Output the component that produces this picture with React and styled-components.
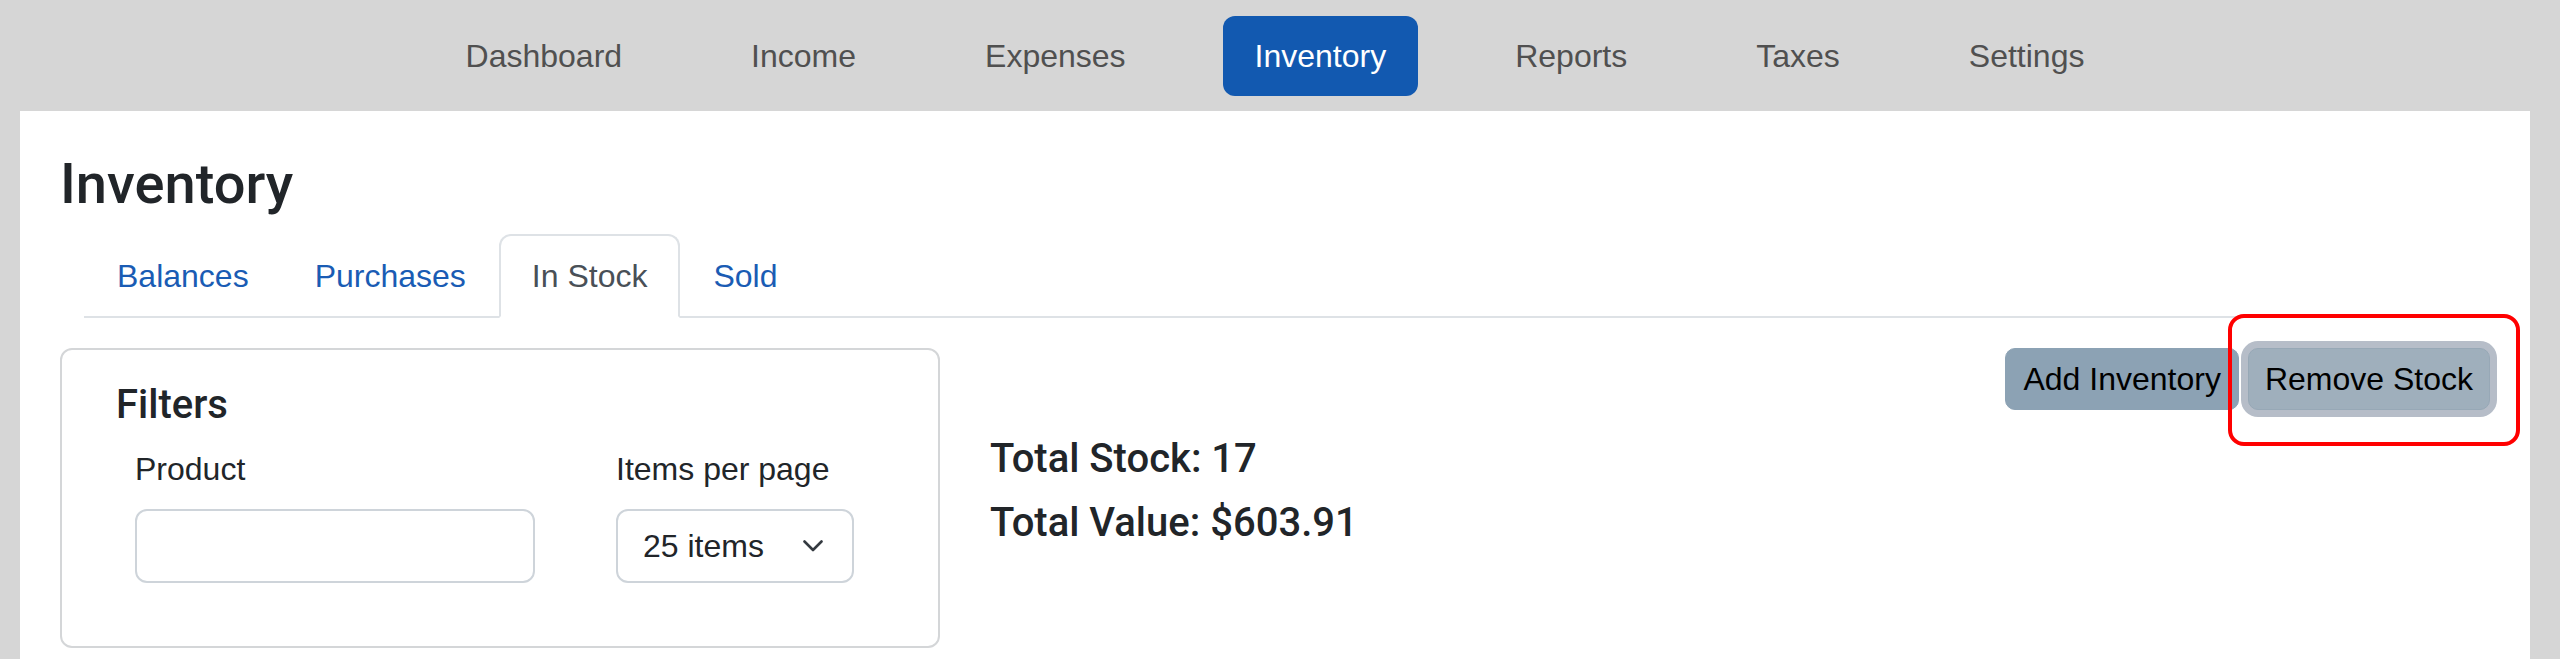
import React from 'react';
import styled, { createGlobalStyle } from 'styled-components';

const GlobalStyle = createGlobalStyle`
  * { box-sizing: border-box; }
  html, body { margin: 0; padding: 0; }
  body {
    background: #d6d6d6;
    font-family: "Liberation Sans", Arial, sans-serif;
    font-size: 32px;
    line-height: 48px;
    color: #212529;
  }
`

const Page = styled.div`
  display: flex;
  flex-direction: column;
  min-height: 100vh;
  padding: 0 30px 0 20px;
`

const TopNav = styled.nav`
  display: flex;
  justify-content: center;
  gap: 65px;
  padding: 16px 0 15px;
`

const NavLink = styled.a`
  padding: 16px 32px;
  border-radius: 12px;
  line-height: 48px;
  text-decoration: none;
  color: ${(p) => (p.$active ? '#ffffff' : '#505050')};
  background: ${(p) => (p.$active ? '#1259b0' : 'transparent')};
`

const Panel = styled.main`
  flex: 1;
  background: #ffffff;
  padding: 40px;
`

const PageTitle = styled.h1`
  margin: 0 0 16px;
  font-family: Roboto, "Liberation Sans", sans-serif;
  font-weight: 500;
  font-size: 56px;
  line-height: 1.2;
  color: #212529;
`

const Tabs = styled.div`
  display: flex;
  margin-left: 24px;
  border-bottom: 2px solid #dee2e6;
`

const Tab = styled.a`
  margin-bottom: -2px;
  padding: 16px 31px;
  border: 2px solid ${(p) => (p.$active ? '#dee2e6' : 'transparent')};
  border-bottom-color: ${(p) => (p.$active ? '#ffffff' : 'transparent')};
  border-radius: 12px 12px 0 0;
  background: ${(p) => (p.$active ? '#ffffff' : 'transparent')};
  color: ${(p) => (p.$active ? '#495057' : '#1a5cb4')};
  text-decoration: none;
`

const ContentRow = styled.section`
  display: flex;
  align-items: flex-start;
  margin-top: 30px;
`

const FilterCard = styled.div`
  width: 880px;
  border: 2px solid #d4d6d8;
  border-radius: 12px;
  padding: 31px 0 63px 54px;
`

const SectionTitle = styled.h5`
  margin: 0 0 16px;
  font-family: Roboto, "Liberation Sans", sans-serif;
  font-weight: 500;
  font-size: 40px;
  line-height: 48px;
  color: #212529;
`

const FilterRow = styled.div`
  display: flex;
  gap: 81px;
  padding-left: 19px;
`

const Field = styled.label`
  display: flex;
  flex-direction: column;
`

const FieldLabel = styled.span`
  margin-bottom: 16px;
`

const TextInput = styled.input`
  width: 400px;
  height: 74px;
  border: 2px solid #ced4da;
  border-radius: 12px;
  padding: 0 24px;
  font: inherit;
  outline: none;
`

const SelectBox = styled.div`
  display: flex;
  align-items: center;
  justify-content: space-between;
  width: 238px;
  height: 74px;
  padding: 0 29px 0 25px;
  border: 2px solid #ced4da;
  border-radius: 12px;
  color: #212529;
`

const Summary = styled.div`
  flex: 1;
  display: flex;
  flex-direction: column;
  margin-left: 50px;
`

const ButtonBar = styled.div`
  display: flex;
  justify-content: flex-end;
  gap: 9px;
`

const Marked = styled.span`
  position: relative;
  display: inline-flex;
`

const Annotation = styled.span`
  position: absolute;
  top: -34px;
  right: -30px;
  bottom: -36px;
  left: -20px;
  border: 4px solid #ff0000;
  border-radius: 16px;
  pointer-events: none;
`

const ActionButton = styled.button`
  height: 62px;
  padding: 6px ${(p) => (p.$focused ? 16 : 17)}px;
  border: 1px solid ${(p) => (p.$focused ? '#97a8b6' : '#8ca2b4')};
  border-radius: 10px;
  background: ${(p) => (p.$focused ? '#9fafbc' : '#8ca2b4')};
  box-shadow: ${(p) => (p.$focused ? '0 0 0 7px #b6bdc8' : 'none')};
  color: #000000;
  font-family: "Liberation Sans", Arial, sans-serif;
  font-size: 32px;
  line-height: 48px;
  white-space: nowrap;
`

const Totals = styled.div`
  margin-top: 25px;
`

const TotalLine = styled(SectionTitle)`
  margin-bottom: 16px;
`

const navItems = ['Dashboard', 'Income', 'Expenses', 'Inventory', 'Reports', 'Taxes', 'Settings']
const tabItems = ['Balances', 'Purchases', 'In Stock', 'Sold']

function Chevron() {
  return (
    <svg width="20" height="12" viewBox="0 0 20 12" fill="none">
      <polyline points="1.5,1.5 10,10 18.5,1.5" stroke="#343a40" strokeWidth="2.6" strokeLinecap="round" strokeLinejoin="round" />
    </svg>
  )
}

function App() {
  return (
    <Page>
      <GlobalStyle />
      <TopNav>
        {navItems.map((item) => (
          <NavLink key={item} $active={item === 'Inventory'}>{item}</NavLink>
        ))}
      </TopNav>
      <Panel>
        <PageTitle>Inventory</PageTitle>
        <Tabs>
          {tabItems.map((item) => (
            <Tab key={item} $active={item === 'In Stock'}>{item}</Tab>
          ))}
        </Tabs>
        <ContentRow>
          <FilterCard>
            <SectionTitle>Filters</SectionTitle>
            <FilterRow>
              <Field>
                <FieldLabel>Product</FieldLabel>
                <TextInput type="text" />
              </Field>
              <Field>
                <FieldLabel>Items per page</FieldLabel>
                <SelectBox>
                  <span>25 items</span>
                  <Chevron />
                </SelectBox>
              </Field>
            </FilterRow>
          </FilterCard>
          <Summary>
            <ButtonBar>
              <ActionButton>Add Inventory</ActionButton>
              <Marked>
                <ActionButton $focused>Remove Stock</ActionButton>
                <Annotation />
              </Marked>
            </ButtonBar>
            <Totals>
              <TotalLine>Total Stock: 17</TotalLine>
              <TotalLine>Total Value: $603.91</TotalLine>
            </Totals>
          </Summary>
        </ContentRow>
      </Panel>
    </Page>
  )
}

export default App
